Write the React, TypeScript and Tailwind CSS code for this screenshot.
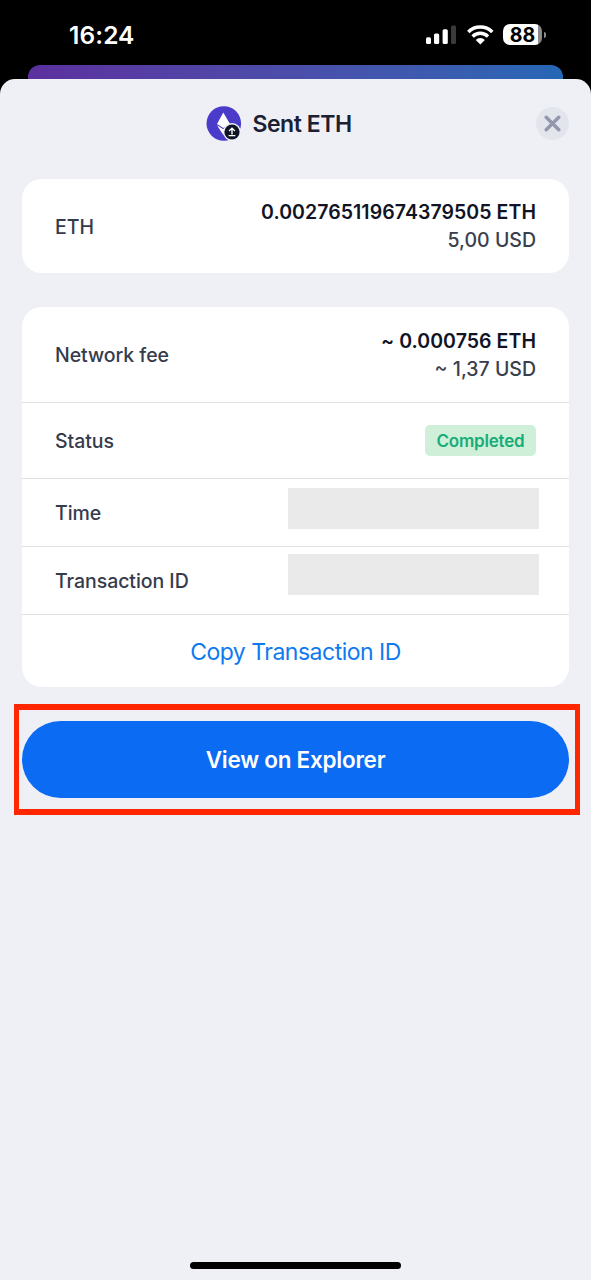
import type { ReactNode } from "react";

const StatusBar = () => {
    return (
        <div className="flex h-[65px] items-start justify-between bg-black pl-[69px] pr-[45px] text-white">
            <span className="mt-[19px] text-[24.5px] leading-[32px] font-semibold tracking-[0.1px]">16:24</span>
            <div className="mt-[24px] flex items-start">
                <svg width="31" height="21" viewBox="0 0 31 21" className="mr-[10px]">
                    <rect x="0" y="13.300" width="5" height="6.700" rx="1.500" fill="#fff" />
                    <rect x="8" y="9.600" width="5.200" height="10.400" rx="1.500" fill="#fff" />
                    <rect x="16.600" y="5.300" width="5.200" height="14.700" rx="1.500" fill="#fff" />
                    <rect x="25" y="1.500" width="5" height="18.500" rx="1.500" fill="#3a3a3a" />
                </svg>
                <svg width="27" height="21" viewBox="0 0 27 21" className="mr-[9px]">
                    <path d="M1.300 8A17 17 0 0 1 25.300 8" fill="none" stroke="#fff" strokeWidth="3.500" />
                    <path d="M5.600 12.400A11.200 11.200 0 0 1 21 12.400" fill="none" stroke="#fff" strokeWidth="3.500" />
                    <path d="M13.300 20.500L8.700 15.900A6.600 6.600 0 0 1 17.900 15.900Z" fill="#fff" />
                </svg>
                <div className="flex h-[21px] w-[39px] items-center justify-center rounded-[7px] bg-[linear-gradient(90deg,#fff_35px,#8b8b8b_35px)] pt-[2px] text-[19.5px] leading-none font-bold text-black">
                    88
                </div>
                <span className="mt-[8px] ml-[2px] h-[6px] w-[2px] rounded-r-full bg-[#8b8b8b]" />
            </div>
        </div>
    )
}

const EthIcon = () => {
    return (
        <svg width="36" height="36" viewBox="0 0 36 36">
            <circle cx="17.800" cy="17.500" r="17.300" fill="#4a3bcb" />
            <path d="M17.300 6.600L24 17.900L17.300 21.900L11 17.900Z" fill="#fff" />
            <path d="M11 19.300L17.300 23.200L24 19.300L17.300 29Z" fill="#fff" />
            <circle cx="26" cy="26" r="9" fill="#eff0f6" />
            <circle cx="26" cy="26" r="7.600" fill="#0e1426" />
            <path d="M26 28.500V23M23.100 24.900L26 22.100L28.900 24.900M22.600 29.600H29.400" fill="none" stroke="#fff" strokeWidth="1.400" />
        </svg>
    )
}

const Amount = ({ value, fiat }: { value: string; fiat: string }) => {
    return (
        <div className="text-right text-[19.5px] leading-[28px]">
            <p className="font-semibold tracking-[0.06px] text-[#101426]">{value}</p>
            <p className="font-medium text-[#3a3e4d]">{fiat}</p>
        </div>
    )
}

const Row = ({ label, className, children }: { label: string; className: string; children: ReactNode }) => {
    return (
        <div className={`flex items-center justify-between pl-[33px] ${className}`}>
            <span className="pt-[3px] text-[19.5px] font-[550] tracking-[-0.05px] text-[#353b4c]">{label}</span>
            {children}
        </div>
    )
}

const App = () => {
    return (
        <div className="flex h-[1280px] w-[591px] flex-col bg-black font-['Inter',sans-serif]">
            <StatusBar />
            <div className="mx-[28px] h-[14px] shrink-0 rounded-t-[12px] bg-linear-to-r from-[#5b309f] to-[#2467b5]" />
            <main className="flex grow flex-col rounded-t-[15px] bg-[#eff0f6] px-[22px]">
                <header className="grid h-[100px] grid-cols-[33px_1fr_33px] items-start pt-[28px]">
                    <div className="col-start-2 flex h-[33px] items-center justify-center gap-[10px] pr-[33px]">
                        <EthIcon />
                        <h1 className="text-[23px] leading-[32px] font-semibold tracking-[-0.45px] text-[#1b2033]">Sent ETH</h1>
                    </div>
                    <button aria-label="Close" className="flex size-[33px] items-center justify-center rounded-full bg-[#e3e5ed]">
                        <svg width="17" height="17" viewBox="0 0 17 17">
                            <path d="M2.200 2.200L14.800 14.800M14.800 2.200L2.200 14.800" stroke="#9297ab" strokeWidth="3.400" strokeLinecap="round" />
                        </svg>
                    </button>
                </header>

                <section className="h-[94px] rounded-[20px] bg-white">
                    <Row label="ETH" className="h-full pr-[33px]">
                        <Amount value="0.002765119674379505 ETH" fiat="5,00 USD" />
                    </Row>
                </section>

                <section className="mt-[34px] h-[380px] divide-y divide-[#dfe0e4] rounded-[20px] bg-white">
                    <Row label="Network fee" className="h-[96px] pr-[33px]">
                        <Amount value="~ 0.000756 ETH" fiat="~ 1,37 USD" />
                    </Row>
                    <Row label="Status" className="h-[76px] pr-[33px]">
                        <span className="flex h-[31px] w-[111px] items-center justify-center rounded-[5px] bg-[#cfefd9] pt-[2px] text-[17px] font-semibold tracking-[-0.2px] text-[#17ad78]">Completed</span>
                    </Row>
                    <Row label="Time" className="h-[68px] pr-[30px]">
                        <span className="mb-[8px] h-[41px] w-[251px] bg-[#eaeaea]" />
                    </Row>
                    <Row label="Transaction ID" className="h-[68px] pr-[30px]">
                        <span className="mb-[12px] h-[41px] w-[251px] bg-[#eaeaea]" />
                    </Row>
                    <button className="h-[72px] w-full pt-[2px] text-[23px] tracking-[-0.5px] text-[#0f7af0]">Copy Transaction ID</button>
                </section>

                <div className="mr-[-11px] ml-[-8px] mt-[17px] h-[111px] border-x-[5px] border-y-[6px] border-[#ff2600] pt-[11px] pr-[6px] pl-[3px]">
                    <button className="h-[77px] w-full rounded-full bg-[#0b6bf2] pt-px text-[22.5px] font-semibold tracking-[-0.25px] text-white">View on Explorer</button>
                </div>

                <div className="mx-auto mt-auto mb-[11px] h-[7px] w-[211px] rounded-full bg-black" />
            </main>
        </div>
    )
}

export default App
